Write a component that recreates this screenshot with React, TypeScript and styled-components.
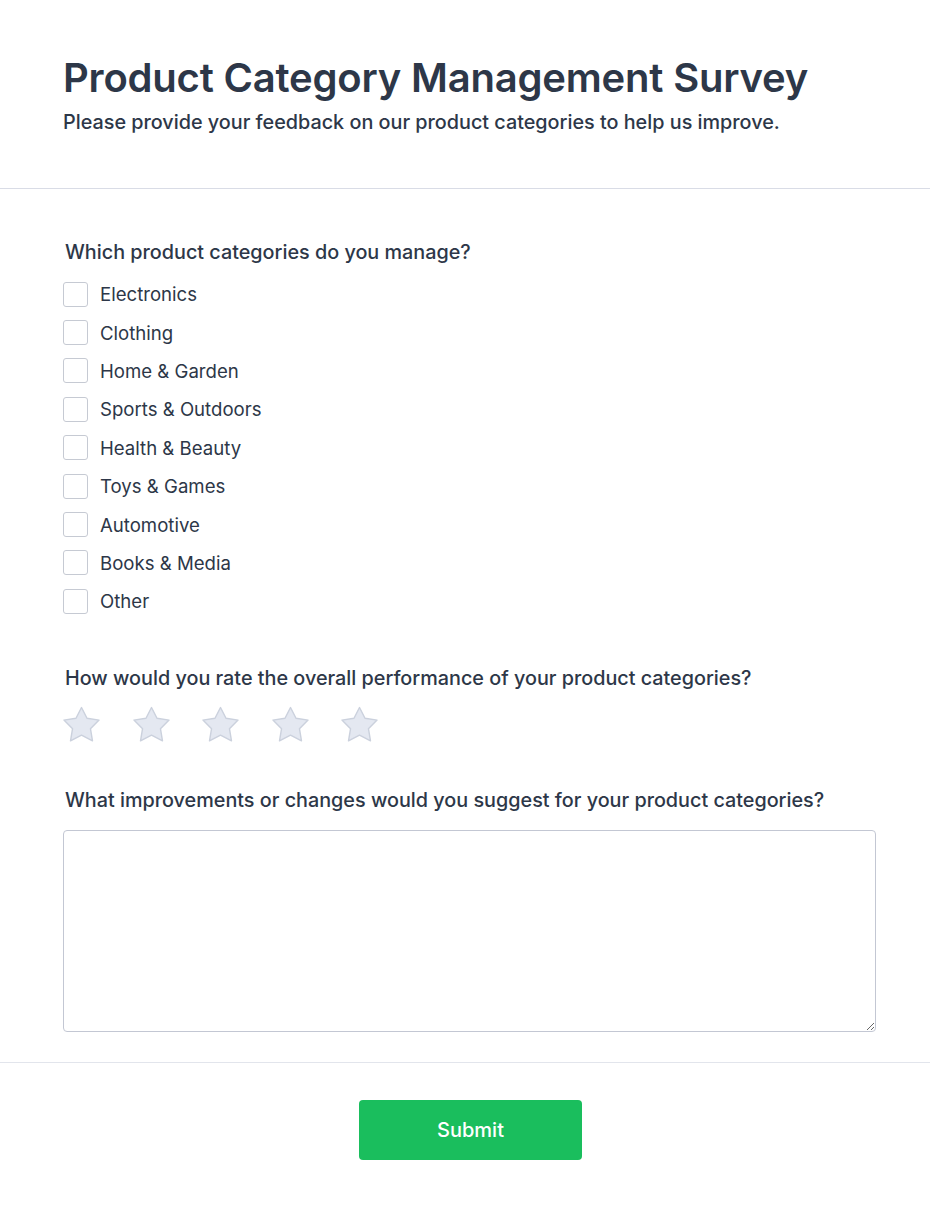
import React, { useState } from "react";
import styled, { createGlobalStyle } from "styled-components";

const Global = createGlobalStyle`
  html, body { margin: 0; padding: 0; background: #ffffff; }
  body { font-family: Inter, "Noto Sans", sans-serif; color: #2d3748; }
  * { box-sizing: border-box; }
`;

const Page = styled.div`
  width: 930px;
  display: flex;
  flex-direction: column;
`;

const Header = styled.header`
  padding: 52px 54px 51px 63px;
  border-bottom: 1px solid #d9dce6;
`;

const Title = styled.h1`
  margin: 0;
  font-size: 40px;
  line-height: 52px;
  font-weight: 600;
  color: #2d3748;
  letter-spacing: -0.2px;
`;

const Subtitle = styled.p`
  margin: 3px 0 0;
  font-size: 19.8px;
  line-height: 30px;
  font-weight: 500;
  color: #2d3748;
`;

const Body = styled.main`
  padding: 50px 54px 30px 63px;
  display: flex;
  flex-direction: column;
  gap: 44px;
  border-bottom: 1px solid #e2e5ec;
`;

const Question = styled.section`
  display: flex;
  flex-direction: column;
`;

const QLabel = styled.h2`
  margin: 0 0 10px 2px;
  font-size: 19.8px;
  line-height: 26px;
  font-weight: 500;
  color: #2d3748;
`;

const CheckList = styled.div`
  display: flex;
  flex-direction: column;
`;

const CheckRow = styled.label`
  display: flex;
  align-items: center;
  gap: 12px;
  height: 38.4px;
  font-size: 18.6px;
  color: #2d3748;
  cursor: pointer;
`;

const Box = styled.span<{ $on: boolean }>`
  width: 25px;
  height: 25px;
  border: 1px solid #c6cad3;
  border-radius: 3px;
  background: ${(p) => (p.$on ? "#1abe5d" : "#fff")};
  flex: none;
`;

const Stars = styled.div`
  display: flex;
  gap: 30.5px;
  margin-top: 4px;
  margin-left: -1px;
`;

const StarBtn = styled.button`
  border: none;
  background: none;
  padding: 0;
  width: 39px;
  height: 38px;
  cursor: pointer;
  display: block;
`;

const TextArea = styled.textarea`
  width: 813px;
  height: 202px;
  margin-top: 7px;
  border: 1px solid #c3c7d3;
  border-radius: 4px;
  resize: vertical;
  font-family: inherit;
  font-size: 16px;
  padding: 10px;
  outline: none;
`;

const Footer = styled.footer`
  display: flex;
  justify-content: center;
  padding: 37px 54px 49px 65px;
`;

const Submit = styled.button`
  width: 223px;
  height: 60px;
  border: none;
  border-radius: 4px;
  background: #1abe5d;
  color: #ffffff;
  font-family: inherit;
  font-size: 20px;
  font-weight: 500;
  cursor: pointer;
`;

const categories = [
  "Electronics",
  "Clothing",
  "Home & Garden",
  "Sports & Outdoors",
  "Health & Beauty",
  "Toys & Games",
  "Automotive",
  "Books & Media",
  "Other",
];

function Star({ on }: { on: boolean }) {
  return (
    <svg width="39" height="38" viewBox="1 0.4 22 21">
      <path
        d="M12 1.6L15.1 7.65L21.9 8.7L17.05 13.55L18.2 20.4L12 17.2L5.8 20.4L6.95 13.55L2.1 8.7L8.9 7.65Z"
        fill={on ? "#f6c244" : "#e4e8f1"}
        stroke={on ? "#e0a800" : "#cbd1dd"}
        strokeWidth="0.8"
        strokeLinejoin="round"
      />
    </svg>
  );
}

export default function App() {
  const [checked, setChecked] = useState<Record<string, boolean>>({});
  const [rating, setRating] = useState(0);
  return (
    <Page>
      <Global />
      <Header>
        <Title>Product Category Management Survey</Title>
        <Subtitle>Please provide your feedback on our product categories to help us improve.</Subtitle>
      </Header>
      <Body>
        <Question>
          <QLabel>Which product categories do you manage?</QLabel>
          <CheckList>
            {categories.map((c) => (
              <CheckRow key={c} onClick={() => setChecked({ ...checked, [c]: !checked[c] })}>
                <Box $on={!!checked[c]} />
                {c}
              </CheckRow>
            ))}
          </CheckList>
        </Question>
        <Question>
          <QLabel>How would you rate the overall performance of your product categories?</QLabel>
          <Stars>
            {[1, 2, 3, 4, 5].map((n) => (
              <StarBtn key={n} onClick={() => setRating(n)} aria-label={`${n} star`}>
                <Star on={n <= rating} />
              </StarBtn>
            ))}
          </Stars>
        </Question>
        <Question>
          <QLabel>What improvements or changes would you suggest for your product categories?</QLabel>
          <TextArea />
        </Question>
      </Body>
      <Footer>
        <Submit>Submit</Submit>
      </Footer>
    </Page>
  );
}
